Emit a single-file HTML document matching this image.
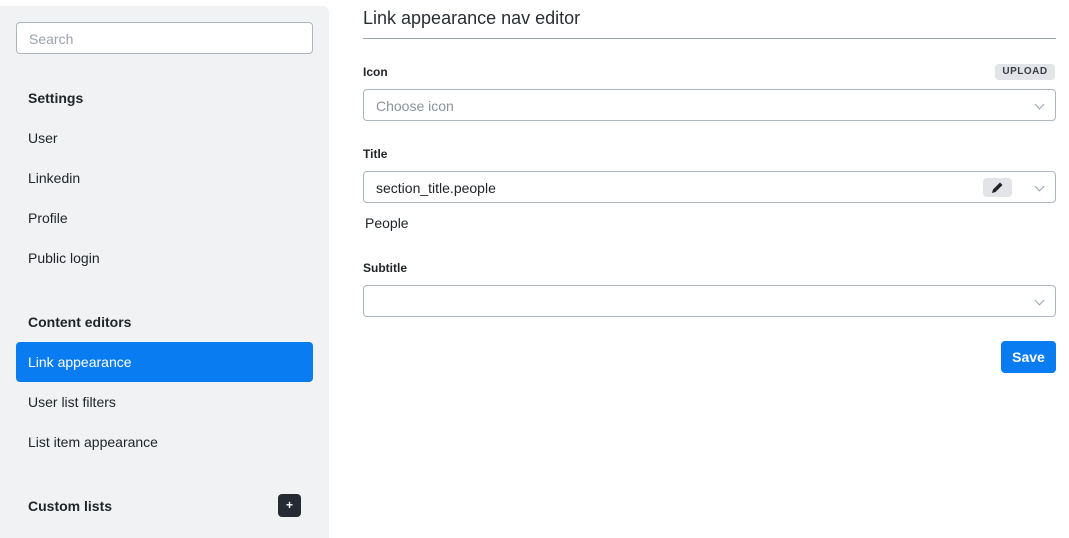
<!DOCTYPE html>
<html><head><meta charset="utf-8"><style>
*{box-sizing:border-box;margin:0;padding:0}
html,body{width:1069px;height:538px;overflow:hidden}
body{background:#fff;font-family:"Liberation Sans",sans-serif;color:#212529;position:relative;font-size:14px}
.side{position:absolute;left:0;top:6px;width:329px;height:532px;background:#f1f2f4;border-top-right-radius:6px}
.search{position:absolute;left:16px;top:16px;width:297px;height:32px;border:1px solid #adb5bd;border-radius:4px;background:#fff;padding:8px 12px;color:#9aa2ab;font-size:14px}
.h{position:absolute;left:28px;font-weight:bold;font-size:14px}
.i{position:absolute;left:28px;font-size:14px}
.act{position:absolute;left:16px;top:336px;width:297px;height:40px;background:#0a7cf2;border-radius:4px;color:#fff;padding:12px;font-size:14px}
.plus{position:absolute;left:278px;width:23px;height:23px;background:#262b33;border-radius:4px;color:#fff;font-size:12px;font-weight:bold;text-align:center;line-height:23px}
.title{position:absolute;left:363px;top:8px;font-size:18px;color:#2a2f34}
.hr{position:absolute;left:363px;top:38px;width:693px;height:1px;background:#9aa2ab}
.lab{position:absolute;left:363px;font-size:12px;font-weight:bold}
.box{position:absolute;left:363px;width:693px;height:32px;border:1px solid #adb5bd;border-radius:4px;padding:8px 12px;font-size:14px}
.chev{position:absolute;right:12px;top:11px;width:7px;height:7px;border-right:1px solid #9aa2ab;border-bottom:1px solid #9aa2ab;transform:rotate(45deg)}
.up{position:absolute;left:995px;top:64px;width:60px;height:16px;background:#e2e4e7;border-radius:4px;font-size:10px;font-weight:bold;text-align:center;line-height:16px;letter-spacing:.5px;color:#3a3f45}
.pen{position:absolute;right:43px;top:6px;width:29px;height:19px;background:#e2e4e7;border-radius:4px}
.save{position:absolute;left:1001px;top:341px;width:55px;height:32px;background:#0a7cf2;border-radius:4px;color:#fff;font-size:14px;font-weight:bold;text-align:center;line-height:32px}
</style></head><body>
<div class="side">
<div class="search">Search</div>
<div class="h" style="top:84px">Settings</div>
<div class="i" style="top:124px">User</div>
<div class="i" style="top:164px">Linkedin</div>
<div class="i" style="top:204px">Profile</div>
<div class="i" style="top:244px">Public login</div>
<div class="h" style="top:308px">Content editors</div>
<div class="act">Link appearance</div>
<div class="i" style="top:388px">User list filters</div>
<div class="i" style="top:428px">List item appearance</div>
<div class="h" style="top:492px">Custom lists</div>
<div class="plus" style="top:488px">+</div>
</div>
<div class="title">Link appearance nav editor</div>
<div class="hr"></div>
<div class="lab" style="top:65px">Icon</div>
<div class="up">UPLOAD</div>
<div class="box" style="top:89px;color:#8a929b">Choose icon<div class="chev"></div></div>
<div class="lab" style="top:147px">Title</div>
<div class="box" style="top:171px">section_title.people<div class="pen"><svg width="29" height="19" viewBox="0 0 29 19"><path d="M9 15l1-3.5 7-7 2.5 2.5-7 7z" fill="#222"/></svg></div><div class="chev"></div></div>
<div style="position:absolute;left:365px;top:215px;font-size:14px">People</div>
<div class="lab" style="top:261px">Subtitle</div>
<div class="box" style="top:285px"><div class="chev"></div></div>
<div class="save">Save</div>
</body></html>
